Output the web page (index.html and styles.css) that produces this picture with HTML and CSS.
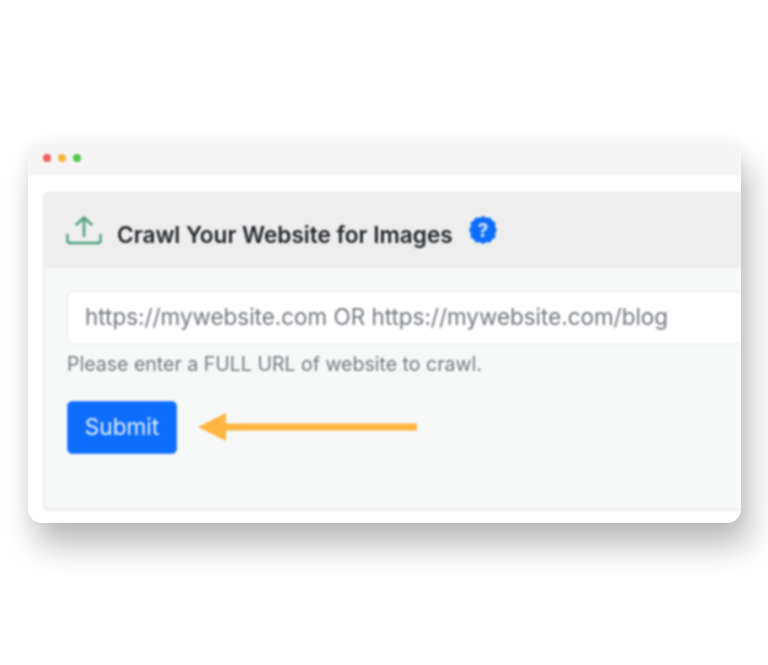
FILE: index.html
```html
<!DOCTYPE html>
<html lang="en">
<head>
<meta charset="utf-8">
<title>Crawl Your Website for Images</title>
<link rel="stylesheet" href="styles.css">
</head>
<body>
<main class="window">
  <div class="titlebar">
    <span class="dot dot-red"></span>
    <span class="dot dot-yellow"></span>
    <span class="dot dot-green"></span>
  </div>
  <div class="content">
    <section class="card">
      <header class="card-head">
        <svg class="upload" viewBox="0 0 36 30" width="36" height="30" aria-hidden="true">
          <path d="M1.500 20v5.500a2.500 2.500 0 0 0 2.500 2.500h28a2.500 2.500 0 0 0 2.500-2.500V20M18 21V2.500M10.500 9.500 18 2.500l7.500 7" fill="none" stroke="#4f9f7e" stroke-width="2.400" stroke-linecap="round" stroke-linejoin="round"/>
        </svg>
        <h1 class="title">Crawl Your Website for Images</h1>
        <svg class="help" viewBox="0 0 28 28" width="28" height="28" aria-hidden="true">
          <path d="M14 0l3.400 1.700 3.800-.3 2 3.200 3.300 2-.3 3.800L28 14l-1.800 3.600.3 3.800-3.300 2-2 3.200-3.800-.3L14 28l-3.400-1.700-3.800.3-2-3.200-3.300-2 .3-3.800L0 14l1.800-3.600-.3-3.800 3.300-2 2-3.200 3.800.3z" fill="#0d6efd"/>
          <text class="help-mark" x="14" y="20.500" text-anchor="middle">?</text>
        </svg>
      </header>
      <div class="card-body">
        <div class="input">https://mywebsite.com OR https://mywebsite.com/blog</div>
        <p class="hint">Please enter a FULL URL of website to crawl.</p>
        <div class="actions">
          <button class="submit" type="button">Submit</button>
          <svg class="arrow" viewBox="0 0 219 28" width="219" height="28" aria-hidden="true">
            <path d="M0 14 28 0v10.500h191v7H28V28z" fill="#ffb53f"/>
          </svg>
        </div>
      </div>
    </section>
  </div>
</main>
</body>
</html>
```

FILE: styles.css
```css
* { box-sizing: border-box; }
html, body { margin: 0; height: 100%; background: #fff; overflow: hidden; }
body {
  padding: 143px 27px 0 28px;
  font-family: Inter, "Liberation Sans", sans-serif;
}
.window {
  height: 380px;
  border-radius: 14px;
  background: #fff;
  overflow: clip;
  box-shadow: 8px 22px 32px rgba(0, 0, 0, 0.27), 0 0 14px rgba(0, 0, 0, 0.05);
}
.titlebar {
  display: flex;
  align-items: center;
  gap: 7px;
  height: 32px;
  padding: 0 0 2px 15px;
  background: #f5f5f5;
  border-bottom: 1px solid #efefef;
  filter: blur(0.9px);
}
.dot { width: 8px; height: 8px; border-radius: 50%; }
.dot-red { background: #ee5f58; }
.dot-yellow { background: #f8b73e; }
.dot-green { background: #51c84a; }
.content { padding: 17px 0 0 15px; filter: blur(0.85px); }
.card {
  height: 319px;
  width: 720px;
  background: #f7f8f8;
  border: 2px solid #ebecee;
  border-radius: 5px;
}
.card-head {
  display: flex;
  align-items: center;
  height: 74px;
  padding: 0 0 0 21px;
  background: #eeeeee;
  border-bottom: 1px solid #e6e6e6;
}
.upload { flex: none; margin-top: -2px; }
.title {
  margin: 8px 0 0 15px;
  font-size: 22.6px;
  font-weight: 600;
  color: #22262b;
  white-space: nowrap;
}
.help { flex: none; margin: -2px 0 0 16px; }
.help-mark { font: 700 19px Inter, "Liberation Sans", sans-serif; fill: #d6e5ff; }
.card-body { padding: 23px 0 0 22px; }
.input {
  height: 53px;
  width: 700px;
  padding: 0 0 2px 17px;
  display: flex;
  align-items: center;
  background: #fff;
  border: 1px solid #e6e8ea;
  border-radius: 6px;
  font-size: 22.45px;
  color: #747980;
  white-space: nowrap;
}
.hint {
  margin: 8px 0 0;
  font-size: 19.55px;
  line-height: 24px;
  color: #747980;
  white-space: nowrap;
}
.actions { display: flex; align-items: center; gap: 21px; margin-top: 25px; }
.submit {
  width: 110px;
  height: 53px;
  padding: 0 0 3px;
  border: 1px solid #3d8bfd;
  border-radius: 5px;
  background: #0d6efd;
  color: #e2edff;
  font: 400 22.6px Inter, "Liberation Sans", sans-serif;
}
.arrow { flex: none; margin-top: -1px; }
```
